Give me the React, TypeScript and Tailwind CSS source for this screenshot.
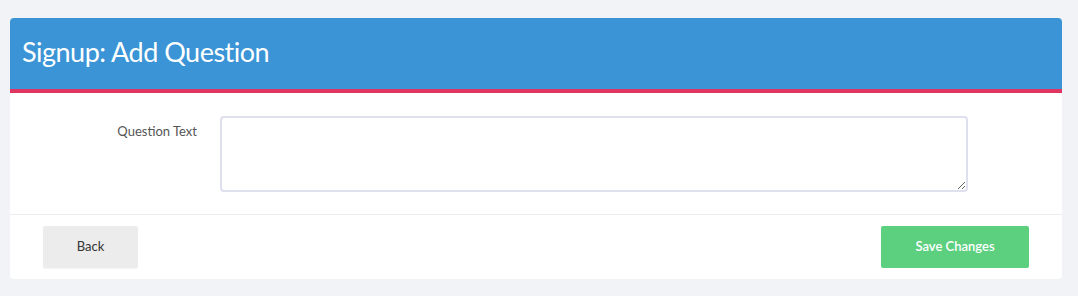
import React from 'react';

const App: React.FC = () => {
  return (
    <div
      className="min-h-[296px] w-full bg-[#f2f3f7] pt-[18px] pl-[10px] pr-[16px] pb-[17px]"
      style={{ fontFamily: 'Lato, "Open Sans", sans-serif' }}
    >
      <div className="bg-white rounded-[4px] overflow-hidden">
        <div className="bg-[#3a94d6] h-[75px] flex items-start pt-[18px] px-[12px] border-b-[4px] border-[#de3562]">
          <h1 className="text-white text-[27px] leading-[32px] tracking-[-0.5px]">Signup: Add Question</h1>
        </div>

        <div className="flex pt-[23px] pb-[22px]">
          <label className="w-[187px] text-right text-[13px] text-[#555] pt-[6px]">Question Text</label>
          <div className="ml-[23px] w-[748px]">
            <textarea className="block w-full h-[76px] border-2 border-[#dfe0ee] rounded-[4px] outline-none px-2 py-1 text-[13px]" />
          </div>
        </div>

        <div className="border-t border-[#ececec] flex justify-between items-center px-[33px] pt-[11px] pb-[11px]">
          <button className="w-[95px] h-[42px] bg-[#ececec] rounded-[2px] text-[13px] text-[#333] shadow-[0_1px_1px_rgba(0,0,0,0.05)]">
            Back
          </button>
          <button className="w-[148px] h-[42px] bg-[#5cd07f] rounded-[2px] text-[13px] text-white font-semibold">
            Save Changes
          </button>
        </div>
      </div>
    </div>
  );
};

export default App;
